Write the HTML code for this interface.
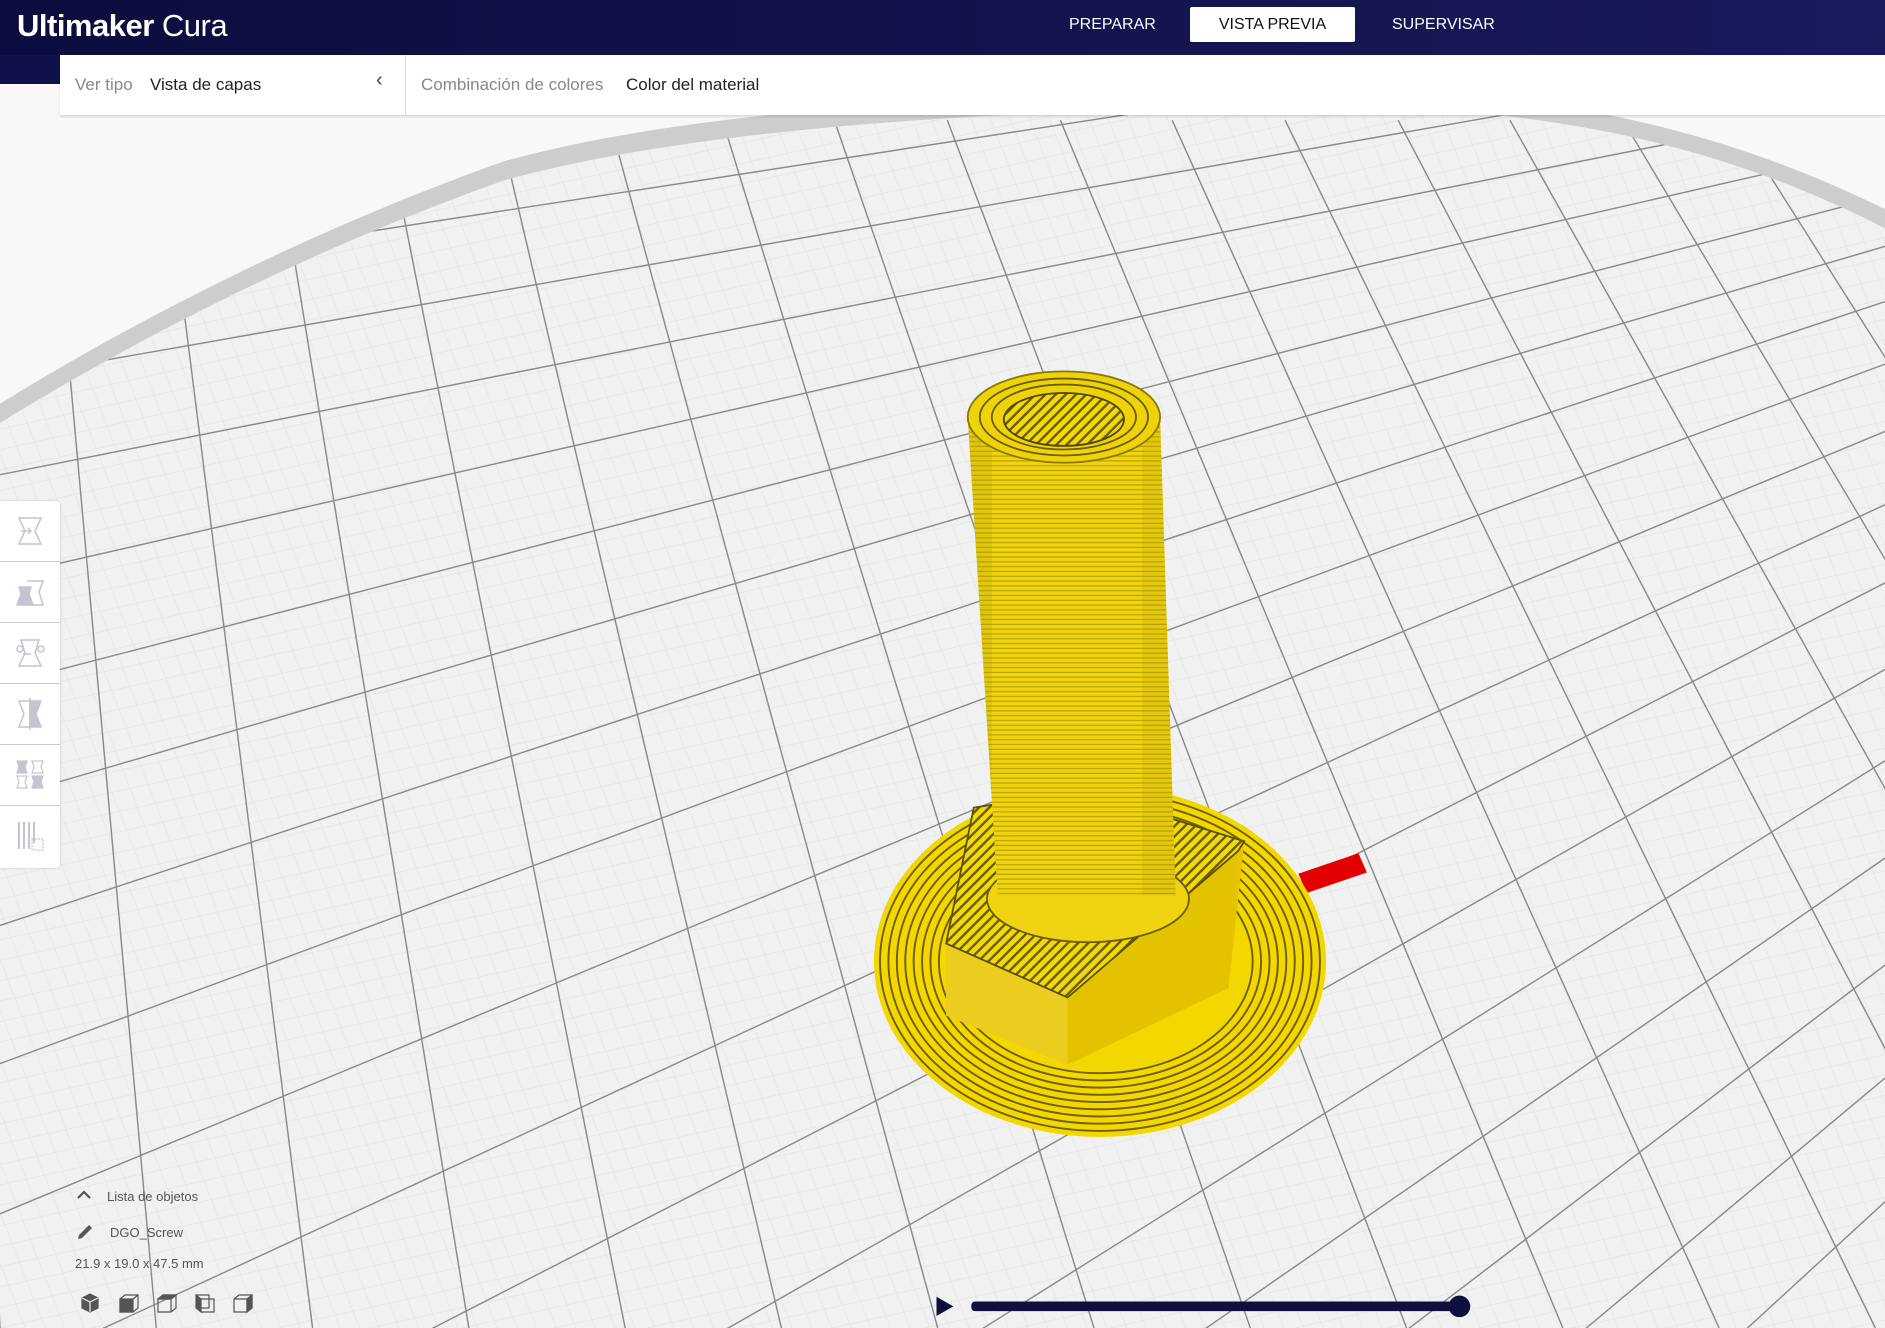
<!DOCTYPE html>
<html><head><meta charset="utf-8">
<style>
html,body{margin:0;padding:0;overflow:hidden;width:1885px;height:1328px}
body{position:relative;background:#f7f7f7;font-family:"Liberation Sans",sans-serif}
#scene{position:absolute;left:0;top:0;width:1885px;height:1328px;display:block}
.hdr{position:absolute;left:0;top:0;width:1885px;height:55px;background:linear-gradient(90deg,#0c0c3e,#191a5a)}
.hdrext{position:absolute;left:0;top:55px;width:60px;height:29px;background:#10104a}
.logo{position:absolute;left:17px;top:8px;color:#fff;font-size:31px;letter-spacing:-0.5px}
.logo b{font-weight:bold}
.nav{position:absolute;top:0;height:50px;line-height:50px;color:#fff;font-size:16px}
.navsel{position:absolute;left:1190px;top:7px;width:165px;height:35px;background:#fff;border-radius:2px;color:#111;font-size:16px;line-height:35px;text-align:center}
.bar{position:absolute;left:60px;top:55px;width:1825px;height:60px;background:#fff;box-shadow:0 2px 2px rgba(0,0,0,.12)}
.bar .t{position:absolute;top:20px;font-size:17px}
.g{color:#888}.d{color:#222}
.div{position:absolute;left:345px;top:0;width:1px;height:60px;background:#ddd}
.tools{position:absolute;left:0;top:501px;width:60px;height:367px;background:#fff;border-radius:0 4px 4px 0;box-shadow:0 0 2px rgba(0,0,0,.2)}
.tools div{height:60px;border-bottom:1px solid #ccc;display:flex;align-items:center;justify-content:center}
.tools div:last-child{border-bottom:none}
.ol{position:absolute;color:#555;font-size:13px}
</style></head><body>
<svg id="scene" viewBox="0 0 1568 1105" preserveAspectRatio="none" xmlns="http://www.w3.org/2000/svg">
<defs>
<clipPath id="plate"><path d="M0 352 C100 290 250 210 420 150 C600 100 900 88 1150 90 C1330 94 1460 135 1568 190 L1568 1105 L0 1105 Z"/></clipPath>
<pattern id="minor" width="16" height="16" patternUnits="userSpaceOnUse" patternTransform="skewX(10) rotate(-12)"><path d="M0 0H16M0 0V16" stroke="#e2e2e2" stroke-width="1" fill="none"/></pattern>
<pattern id="hatch" width="6" height="6" patternUnits="userSpaceOnUse" patternTransform="rotate(-45)"><rect width="6" height="6" fill="#f2d90a"/><rect width="6" height="2" fill="#6b5c00"/></pattern>
<pattern id="ridge" width="6" height="4" patternUnits="userSpaceOnUse"><rect width="6" height="4" fill="#f0d412"/><rect y="3" width="6" height="1" fill="#b9a300"/></pattern>
<clipPath id="shaftc"><path d="M805 348 L830 745 L978 745 L965 348 Z"/></clipPath>
</defs>
<rect width="1568" height="1105" fill="#f8f8f8"/>
<path d="M0 336 C100 274 250 194 420 134 C600 84 900 74 1150 76 C1330 80 1460 121 1568 174 L1568 190 C1460 135 1330 94 1150 90 C900 88 600 100 420 150 C250 210 100 290 0 352 Z" fill="#cdcdcd"/>
<g clip-path="url(#plate)">
<rect width="1568" height="1105" fill="#f1f1f1"/>
<rect width="1568" height="1105" fill="url(#minor)"/>
<g stroke="#8a8a8a" stroke-width="1.2" fill="none">
<line x1="-148" y1="100" x2="-130" y2="1105"/><line x1="-54" y1="100" x2="0" y2="1105"/><line x1="39" y1="100" x2="130" y2="1105"/><line x1="133" y1="100" x2="260" y2="1105"/><line x1="226" y1="100" x2="390" y2="1105"/><line x1="320" y1="100" x2="520" y2="1105"/><line x1="414" y1="100" x2="650" y2="1105"/><line x1="507" y1="100" x2="780" y2="1105"/><line x1="601" y1="100" x2="910" y2="1105"/><line x1="694" y1="100" x2="1040" y2="1105"/><line x1="788" y1="100" x2="1170" y2="1105"/><line x1="882" y1="100" x2="1300" y2="1105"/><line x1="975" y1="100" x2="1430" y2="1105"/><line x1="1069" y1="100" x2="1560" y2="1105"/><line x1="1163" y1="100" x2="1690" y2="1105"/><line x1="1256" y1="100" x2="1820" y2="1105"/><line x1="1350" y1="100" x2="1950" y2="1105"/><line x1="1443" y1="100" x2="2080" y2="1105"/><line x1="1537" y1="100" x2="2210" y2="1105"/><line x1="1630" y1="100" x2="2340" y2="1105"/>
<line x1="0" y1="240" x2="1568" y2="-2"/><line x1="0" y1="315" x2="1568" y2="40"/><line x1="0" y1="395" x2="1568" y2="84"/><line x1="0" y1="480" x2="1568" y2="122"/><line x1="0" y1="570" x2="1568" y2="163"/><line x1="0" y1="665" x2="1568" y2="205"/><line x1="0" y1="770" x2="1568" y2="251"/><line x1="0" y1="885" x2="1568" y2="303"/><line x1="0" y1="1010" x2="1568" y2="359"/><line x1="0" y1="1145" x2="1568" y2="420"/><line x1="0" y1="1290" x2="1568" y2="485"/><line x1="0" y1="1450" x2="1568" y2="557"/><line x1="0" y1="1620" x2="1568" y2="633"/><line x1="0" y1="1800" x2="1568" y2="714"/><line x1="0" y1="2000" x2="1568" y2="803"/><line x1="0" y1="2210" x2="1568" y2="897"/><line x1="0" y1="2440" x2="1568" y2="1000"/>
</g>
</g>
<polygon points="1080,727 1130,710 1137,726 1087,743" fill="#e30000"/>
<rect x="829" y="628" width="5" height="10" fill="#2c2"/>
<ellipse cx="915" cy="800" rx="188" ry="146" fill="#f3d700"/>
<g fill="none" stroke="#6e6000" stroke-width="1.6">
<ellipse cx="915" cy="800" rx="183" ry="141"/><ellipse cx="915" cy="800" rx="176" ry="135"/><ellipse cx="915" cy="800" rx="169" ry="129"/><ellipse cx="915" cy="800" rx="162" ry="123"/><ellipse cx="915" cy="800" rx="155" ry="117"/><ellipse cx="915" cy="800" rx="148" ry="111"/><ellipse cx="915" cy="800" rx="141" ry="105"/><ellipse cx="915" cy="800" rx="134" ry="99"/><ellipse cx="915" cy="800" rx="127" ry="93"/>
</g>
<polygon points="787,785 810,672 900,658 1035,700 1022,822 888,886 787,845" fill="#e6c400"/>
<polygon points="787,785 888,830 888,886 787,845" fill="#ebcd20"/>
<polygon points="888,830 1030,708 1022,822 888,886" fill="#e3c300"/>
<polygon points="787,785 810,672 900,658 1035,700 1030,708 888,830" fill="url(#hatch)" stroke="#5c4f00" stroke-width="1.5"/>
<ellipse cx="905" cy="748" rx="84" ry="36" fill="#f0d412" stroke="#6b5c00" stroke-width="1.5"/>
<g clip-path="url(#shaftc)"><rect x="790" y="340" width="200" height="420" fill="url(#ridge)"/>
<rect x="805" y="340" width="20" height="420" fill="#b19a00" opacity=".25"/><rect x="950" y="340" width="30" height="420" fill="#b19a00" opacity=".2"/></g>
<ellipse cx="885" cy="347" rx="80" ry="38" fill="#efd30a" stroke="#8a7800" stroke-width="1.5"/>
<ellipse cx="885" cy="347" rx="70" ry="32" fill="none" stroke="#6b5c00" stroke-width="1.5"/>
<ellipse cx="885" cy="347" rx="60" ry="27" fill="none" stroke="#6b5c00" stroke-width="1.5"/>
<ellipse cx="885" cy="349" rx="50" ry="22" fill="url(#hatch)" stroke="#4f4400" stroke-width="1.5"/>
<polygon points="779,1079 779,1095 793,1087" fill="#10103f"/>
<rect x="808" y="1083" width="406" height="8" rx="3" fill="#10103f"/>
<circle cx="1214" cy="1087" r="9" fill="#10103f"/>
</svg>

<div class="hdr"></div>
<div class="hdrext"></div>
<div class="logo"><b>Ultimaker</b> <span>Cura</span></div>
<div class="nav" style="left:1069px">PREPARAR</div>
<div class="navsel">VISTA PREVIA</div>
<div class="nav" style="left:1392px">SUPERVISAR</div>

<div class="bar">
<span class="t g" style="left:15px">Ver tipo</span>
<span class="t d" style="left:90px">Vista de capas</span>
<span class="t" style="left:316px;top:14px;font-size:20px;color:#444">&#8249;</span>
<div class="div"></div>
<span class="t g" style="left:361px">Combinación de colores</span>
<span class="t d" style="left:566px">Color del material</span>
</div>

<div class="tools">
<div><svg width="34" height="34" viewBox="0 0 34 34" fill="none" stroke="#c4c4d2" stroke-width="1.5"><path d="M6 4H28L22 17L28 30H6L12 17Z"/><path d="M8 17H18M15 14L18 17L15 20"/></svg></div>
<div><svg width="34" height="34" viewBox="0 0 34 34" fill="none" stroke="#c4c4d2" stroke-width="1.5"><path d="M14 6H30L26 17L30 30H14"/><path d="M4 30L8 19L6 12H18L16 19L20 30Z" fill="#c4c4d2"/></svg></div>
<div><svg width="34" height="34" viewBox="0 0 34 34" fill="none" stroke="#c4c4d2" stroke-width="1.5"><path d="M8 4H26L22 17L28 30H6L12 17Z"/><circle cx="7" cy="13" r="3"/><circle cx="28" cy="13" r="3"/><path d="M10 18H18"/></svg></div>
<div><svg width="34" height="34" viewBox="0 0 34 34" fill="none" stroke="#c4c4d2" stroke-width="1.5"><path d="M6 4H17V30H6L11 17Z"/><path d="M17 4H28L23 17L28 30H17Z" fill="#c4c4d2"/><path d="M17 1V33"/></svg></div>
<div><svg width="34" height="34" viewBox="0 0 34 34" fill="#c4c4d2" stroke="#c4c4d2" stroke-width="1.2"><path d="M4 3H14L12 9L14 15H4L6 9Z"/><path d="M19 3H30L28 9L30 15H19L21 9Z" fill="none"/><path d="M4 18H14L12 24L14 30H4L6 24Z" fill="none"/><path d="M19 18H30L28 24L30 30H19L21 24Z"/></svg></div>
<div><svg width="34" height="34" viewBox="0 0 34 34" fill="none" stroke="#c4c4d2" stroke-width="2"><path d="M6 3V30M11 3V30M16 3V30M21 3V24"/><rect x="19" y="20" width="11" height="11" stroke-width="1.2" stroke-dasharray="2 1"/></svg></div>
</div>

<svg style="position:absolute;left:76px;top:1189px" width="16" height="12" viewBox="0 0 16 12"><path d="M2 9L8 3L14 9" stroke="#555" stroke-width="2.2" fill="none"/></svg>
<div class="ol" style="left:107px;top:1189px">Lista de objetos</div>
<svg style="position:absolute;left:76px;top:1223px" width="18" height="18" viewBox="0 0 18 18"><path d="M2 16L3 12L13 2L16 5L6 15Z" fill="#555"/></svg>
<div class="ol" style="left:110px;top:1225px">DGO_Screw</div>
<div class="ol" style="left:75px;top:1256px">21.9 x 19.0 x 47.5 mm</div>
<svg style="position:absolute;left:80px;top:1292px" width="180" height="22" viewBox="0 0 180 22">
<g stroke="#555" stroke-width="1.2" fill="none">
<path d="M2 6L10 2L18 6V16L10 20L2 16Z" fill="#555"/><path d="M2 6L10 10L18 6M10 10V20" stroke="#f2f2f2"/>
<path d="M40 7L45 3H58V16L53 20H40Z"/><rect x="40" y="7" width="13" height="13" fill="#555"/><path d="M53 7L58 3"/>
<path d="M78 7L83 3H96V16L91 20H78Z"/><path d="M78 7H91V20M91 7L96 3"/><path d="M78 7L83 3H96L91 7Z" fill="#555"/>
<path d="M116 3L121 7V20L116 16Z" fill="#555"/><path d="M116 3H129V16H116M121 7H134V20H121"/>
<path d="M154 7L159 3H172V16L167 20H154Z"/><path d="M154 7H167V20"/><path d="M167 7L172 3V16L167 20Z" fill="#555"/>
</g></svg>
</body></html>
